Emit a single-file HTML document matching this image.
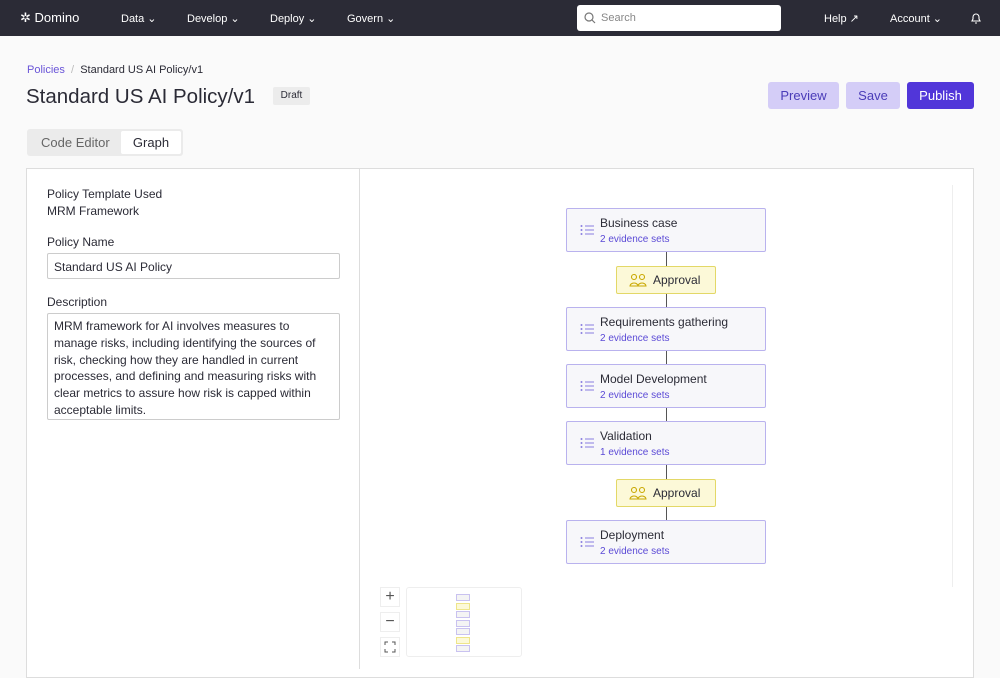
<!DOCTYPE html>
<html><head><style>
*{box-sizing:border-box;margin:0;padding:0}
body{width:1000px;height:667px;overflow:hidden;background:#fafafa;font-family:"Liberation Sans",sans-serif;color:#2b2b36;position:relative}
.nav{position:absolute;left:0;top:0;width:1000px;height:36px;background:#2b2b36;color:#fff;font-size:11px}
.nav span{position:absolute;top:12px}
.abs{position:absolute}
.btn{position:absolute;top:82px;height:27px;border-radius:3px;font-size:13px;text-align:center;line-height:27px}
.node{position:absolute;left:566px;width:200px;height:44px;border:1px solid #b9b2ee;background:#f7f7fa;border-radius:2px}
.node .t{position:absolute;left:33px;top:7px;font-size:12px;color:#2b2b36}
.node .s{position:absolute;left:33px;top:25px;font-size:10px;color:#5b4ad6}
.node svg{position:absolute;left:13px;top:15px}
.appr{position:absolute;left:616px;width:100px;height:28px;border:1px solid #e3d867;background:#fcf9d8;border-radius:2px;font-size:12px;line-height:26px;padding-left:36px}
.appr svg{position:absolute;left:12px;top:6px}
.line{position:absolute;left:666px;width:1px;background:#555}
.lbl{position:absolute;left:47px;font-size:12px;color:#2b2b36}
</style></head><body>
<div class="nav">
<span style="left:20px;top:10px;font-size:13px">✲ Domino</span>
<span style="left:121px">Data ⌄</span>
<span style="left:187px">Develop ⌄</span>
<span style="left:270px">Deploy ⌄</span>
<span style="left:347px">Govern ⌄</span>
<div class="abs" style="left:577px;top:5px;width:204px;height:26px;background:#fff;border-radius:3px"></div>
<svg class="abs" style="left:584px;top:12px" width="12" height="12"><circle cx="5" cy="5" r="4" fill="none" stroke="#777" stroke-width="1.2"/><path d="M8 8l3 3" stroke="#777" stroke-width="1.2"/></svg>
<span style="left:601px;color:#888">Search</span>
<span style="left:824px">Help ↗</span>
<span style="left:890px">Account ⌄</span>
<svg class="abs" style="left:970px;top:12px" width="12" height="13"><path d="M2 9h8l-1-2V5a3 3 0 0 0-6 0v2z M5 11h2" fill="none" stroke="#fff" stroke-width="1.1"/></svg>
</div>
<div class="abs" style="left:27px;top:64px;font-size:11px"><span style="color:#6a55d8">Policies</span> <span style="color:#bbb">&nbsp;/&nbsp;</span> Standard US AI Policy/v1</div>
<div class="abs" style="left:26px;top:85px;font-size:20.5px">Standard US AI Policy/v1</div>
<div class="abs" style="left:273px;top:87px;width:37px;height:18px;background:#ececec;font-size:10px;line-height:18px;text-align:center;border-radius:2px">Draft</div>
<div class="btn" style="left:768px;width:71px;background:#d4cdf7;color:#4a3cb8">Preview</div>
<div class="btn" style="left:846px;width:54px;background:#d4cdf7;color:#4a3cb8">Save</div>
<div class="btn" style="left:907px;width:67px;background:#5136d9;color:#fff">Publish</div>
<div class="abs" style="left:27px;top:129px;width:156px;height:27px;background:#ebebeb;border-radius:3px"></div>
<div class="abs" style="left:41px;top:135px;font-size:13px;color:#666">Code Editor</div>
<div class="abs" style="left:121px;top:131px;width:60px;height:23px;background:#fff;border-radius:2px;font-size:13px;text-align:center;line-height:23px">Graph</div>
<div class="abs" style="left:26px;top:168px;width:948px;height:510px;background:#fff;border:1px solid #ddd"></div>
<div class="abs" style="left:359px;top:169px;width:1px;height:500px;background:#ddd"></div>
<div class="abs" style="left:952px;top:185px;width:1px;height:402px;background:#eee"></div>
<div class="lbl" style="top:187px">Policy Template Used</div>
<div class="lbl" style="top:204px">MRM Framework</div>
<div class="lbl" style="top:235px">Policy Name</div>
<div class="abs" style="left:47px;top:253px;width:293px;height:26px;border:1px solid #ccc;border-radius:2px;font-size:12px;padding:6px 6px">Standard US AI Policy</div>
<div class="lbl" style="top:295px">Description</div>
<div class="abs" style="left:47px;top:313px;width:293px;height:107px;border:1px solid #ccc;border-radius:2px;font-size:12px;line-height:16.8px;padding:4px 6px">MRM framework for AI involves measures to manage risks, including identifying the sources of risk, checking how they are handled in current processes, and defining and measuring risks with clear metrics to assure how risk is capped within acceptable limits.</div>

<div class="line" style="top:252px;height:14px"></div>
<div class="line" style="top:294px;height:13px"></div>
<div class="line" style="top:351px;height:13px"></div>
<div class="line" style="top:408px;height:13px"></div>
<div class="line" style="top:465px;height:14px"></div>
<div class="line" style="top:507px;height:13px"></div>

<div class="node" style="top:208px"><svg width="14" height="12"><g fill="#8a7de0"><circle cx="1.5" cy="2" r="1"/><circle cx="1.5" cy="6" r="1"/><circle cx="1.5" cy="10" r="1"/></g><path d="M5 2h9M5 6h9M5 10h9" stroke="#8a7de0"/></svg><div class="t">Business case</div><div class="s">2 evidence sets</div></div>
<div class="appr" style="top:266px"><svg width="18" height="14"><g fill="none" stroke="#c9a800" stroke-width="1.1"><circle cx="5" cy="4" r="2.5"/><circle cx="13" cy="4" r="2.5"/><path d="M1 13a4 3 0 0 1 8 0zM9 13a4 3 0 0 1 8 0z"/></g></svg>Approval</div>
<div class="node" style="top:307px"><svg width="14" height="12"><g fill="#8a7de0"><circle cx="1.5" cy="2" r="1"/><circle cx="1.5" cy="6" r="1"/><circle cx="1.5" cy="10" r="1"/></g><path d="M5 2h9M5 6h9M5 10h9" stroke="#8a7de0"/></svg><div class="t">Requirements gathering</div><div class="s">2 evidence sets</div></div>
<div class="node" style="top:364px"><svg width="14" height="12"><g fill="#8a7de0"><circle cx="1.5" cy="2" r="1"/><circle cx="1.5" cy="6" r="1"/><circle cx="1.5" cy="10" r="1"/></g><path d="M5 2h9M5 6h9M5 10h9" stroke="#8a7de0"/></svg><div class="t">Model Development</div><div class="s">2 evidence sets</div></div>
<div class="node" style="top:421px"><svg width="14" height="12"><g fill="#8a7de0"><circle cx="1.5" cy="2" r="1"/><circle cx="1.5" cy="6" r="1"/><circle cx="1.5" cy="10" r="1"/></g><path d="M5 2h9M5 6h9M5 10h9" stroke="#8a7de0"/></svg><div class="t">Validation</div><div class="s">1 evidence sets</div></div>
<div class="appr" style="top:479px"><svg width="18" height="14"><g fill="none" stroke="#c9a800" stroke-width="1.1"><circle cx="5" cy="4" r="2.5"/><circle cx="13" cy="4" r="2.5"/><path d="M1 13a4 3 0 0 1 8 0zM9 13a4 3 0 0 1 8 0z"/></g></svg>Approval</div>
<div class="node" style="top:520px"><svg width="14" height="12"><g fill="#8a7de0"><circle cx="1.5" cy="2" r="1"/><circle cx="1.5" cy="6" r="1"/><circle cx="1.5" cy="10" r="1"/></g><path d="M5 2h9M5 6h9M5 10h9" stroke="#8a7de0"/></svg><div class="t">Deployment</div><div class="s">2 evidence sets</div></div>

<div class="abs" style="left:380px;top:587px;width:20px;height:20px;border:1px solid #eee;text-align:center;font-size:16px;line-height:18px;color:#555">+</div>
<div class="abs" style="left:380px;top:612px;width:20px;height:20px;border:1px solid #eee;text-align:center;font-size:16px;line-height:18px;color:#555">−</div>
<div class="abs" style="left:380px;top:637px;width:20px;height:20px;border:1px solid #eee"><svg width="18" height="18"><path d="M4 7V4h3M11 4h3v3M14 11v3h-3M7 14H4v-3" fill="none" stroke="#555"/></svg></div>
<div class="abs" style="left:406px;top:587px;width:116px;height:70px;border:1px solid #eee;border-radius:3px"></div>
<div class="abs" style="left:456px;top:594px;width:14px">
<div style="height:7px;border:1px solid #c9c2f0;background:#f4f4f4;margin-bottom:1.5px"></div>
<div style="height:7px;border:1px solid #eee58a;background:#fcf9d8;margin-bottom:1.5px"></div>
<div style="height:7px;border:1px solid #c9c2f0;background:#f4f4f4;margin-bottom:1.5px"></div>
<div style="height:7px;border:1px solid #c9c2f0;background:#f4f4f4;margin-bottom:1.5px"></div>
<div style="height:7px;border:1px solid #c9c2f0;background:#f4f4f4;margin-bottom:1.5px"></div>
<div style="height:7px;border:1px solid #eee58a;background:#fcf9d8;margin-bottom:1.5px"></div>
<div style="height:7px;border:1px solid #c9c2f0;background:#f4f4f4"></div>
</div>
</body></html>
